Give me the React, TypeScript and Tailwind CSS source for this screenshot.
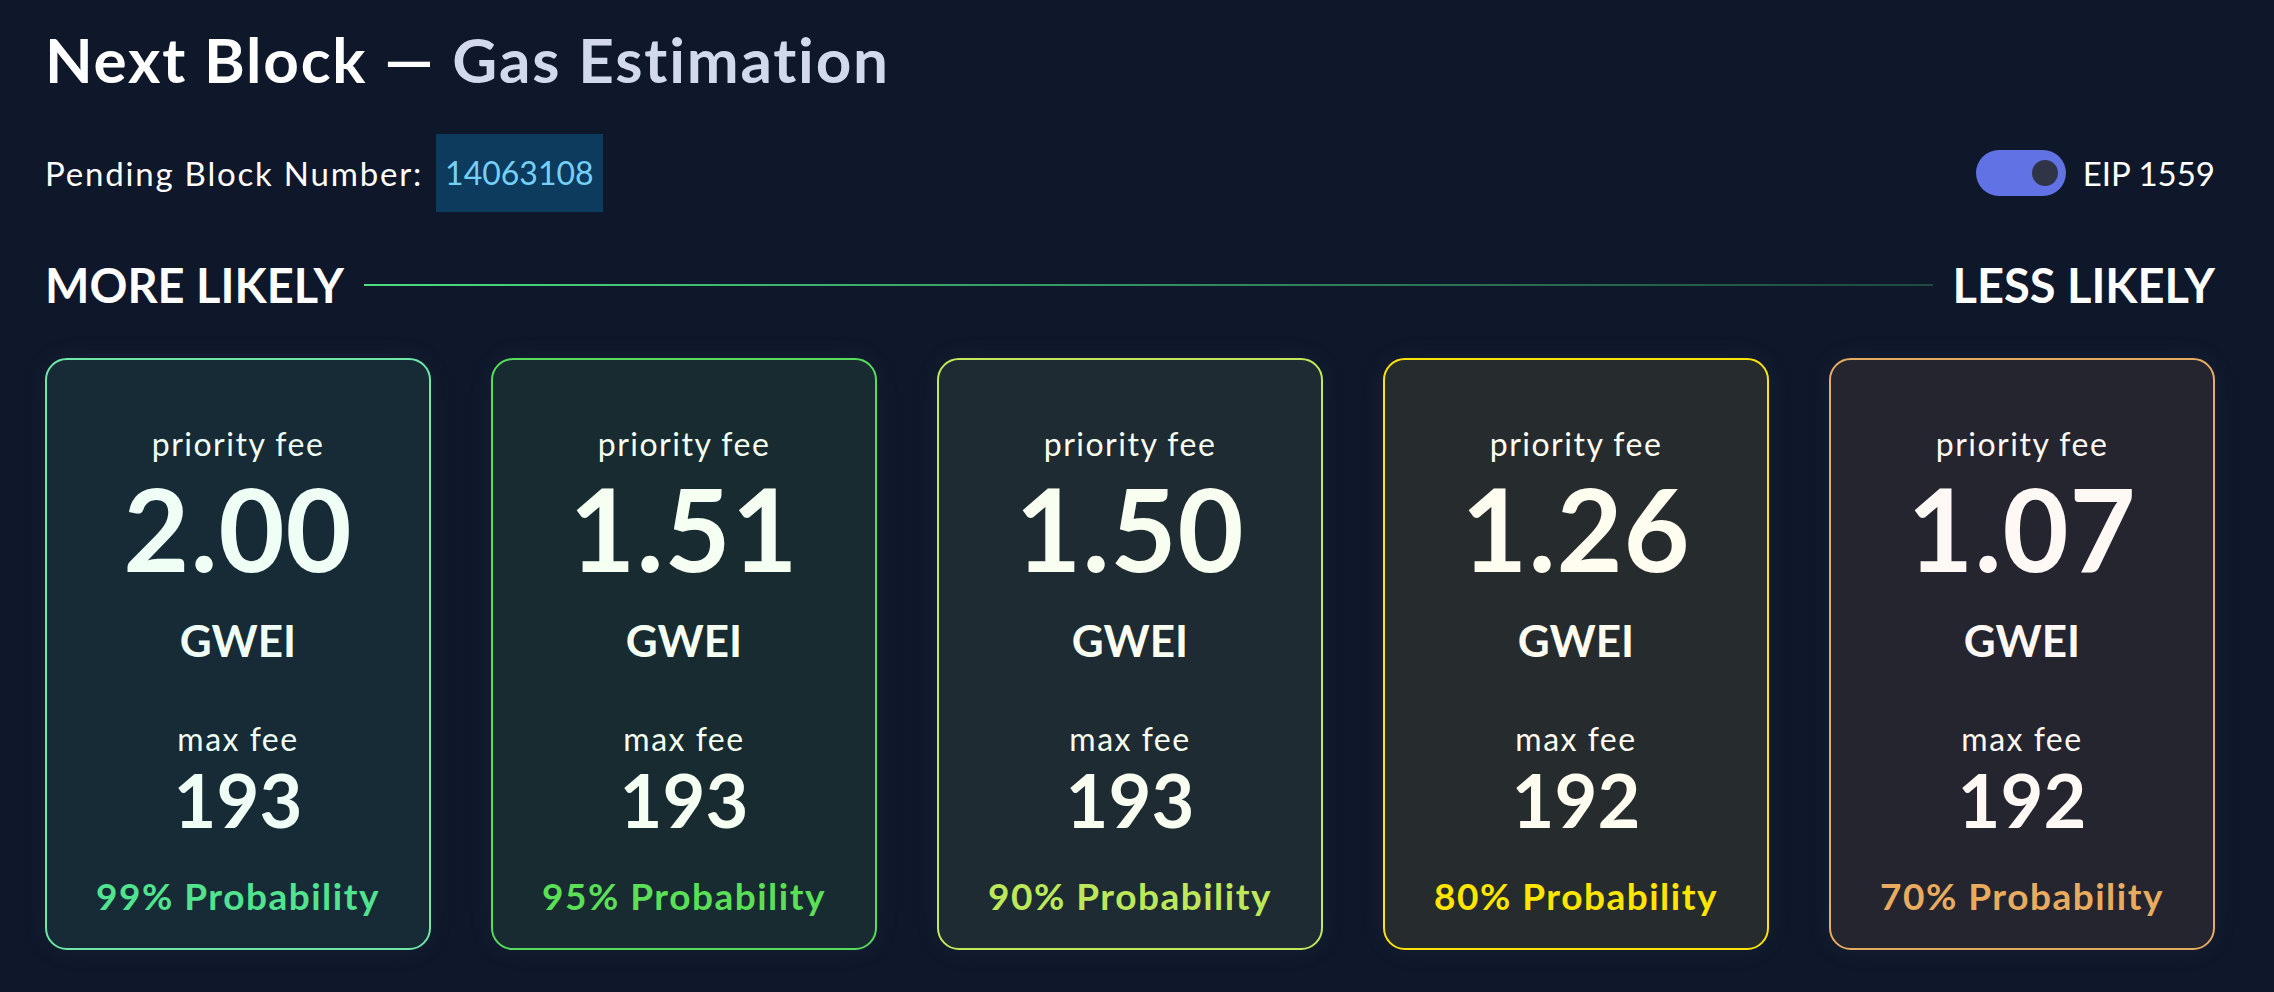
const CARDS = [
  {
    fee: "2.00",
    max: "193",
    prob: 99,
    card: "border-[#6ee7a7] bg-[#172b37]",
    text: "text-[#effff6]",
    accent: "text-[#52e38f]",
  },
  {
    fee: "1.51",
    max: "193",
    prob: 95,
    card: "border-[#58dc5c] bg-[#182b31]",
    text: "text-[#f5fff2]",
    accent: "text-[#5bdf57]",
  },
  {
    fee: "1.50",
    max: "193",
    prob: 90,
    card: "border-[#c2e85b] bg-[#1f2b32]",
    text: "text-[#f8fff0]",
    accent: "text-[#bde85a]",
  },
  {
    fee: "1.26",
    max: "192",
    prob: 80,
    card: "border-[#ffe20a] bg-[#262c2e]",
    text: "text-[#fffdf0]",
    accent: "text-[#ffe500]",
  },
  {
    fee: "1.07",
    max: "192",
    prob: 70,
    card: "border-[#e6ac62] bg-[#24252f]",
    text: "text-[#fff8f4]",
    accent: "text-[#e9ac5f]",
  },
];

function FeeCard({ item }: { item: (typeof CARDS)[number] }) {
  return (
    <div
      className={`flex h-[592px] flex-col items-center rounded-[22px] border-2 pt-[68px] shadow-[0_0_28px_rgba(148,163,184,0.07)] ${item.card} ${item.text}`}
    >
      <p className="text-[32px] leading-none tracking-[1.5px]">priority fee</p>
      <p className="mt-[11px] text-[114px] font-bold leading-none tracking-[1px]">{item.fee}</p>
      <p className="mt-[33px] text-[44px] font-bold leading-none">GWEI</p>
      <p className="mt-[61px] text-[32px] leading-none tracking-[1.5px]">max fee</p>
      <p className="mt-[8px] text-[74px] font-bold leading-none">{item.max}</p>
      <p className={`mt-[40px] text-[37px] font-bold leading-none tracking-[1.5px] ${item.accent}`}>
        {item.prob}% Probability
      </p>
    </div>
  );
}

export default function App() {
  return (
    <div className="min-h-[992px] bg-[#0f172a] pl-[45px] pr-[59px] pt-[28px] font-['Lato',sans-serif] text-white">
      <h1 className="text-[62px] font-bold leading-none tracking-[1.8px]">
        Next Block — <span className="text-[#d2d9ec]">Gas Estimation</span>
      </h1>

      <div className="mt-[44px] flex h-[78px] items-center justify-between">
        <div className="flex h-full items-center">
          <span className="text-[33px] leading-none tracking-[1.8px]">Pending Block Number:</span>
          <span className="ml-[13px] flex h-full items-center bg-[#0d3b5e] px-[9px] text-[32px] leading-none text-[#74d0f6]">
            14063108
          </span>
        </div>
        <div className="flex items-center">
          <button
            type="button"
            aria-pressed="true"
            className="flex h-[46px] w-[90px] items-center justify-end rounded-full bg-[#6172e4] pr-[8px]"
          >
            <span className="h-[26px] w-[26px] rounded-full bg-[#2f3447]" />
          </button>
          <span className="ml-[17px] text-[33px] leading-none">EIP 1559</span>
        </div>
      </div>

      <div className="mt-[49px] flex h-[48px] items-center">
        <span className="text-[47px] font-bold leading-none">MORE LIKELY</span>
        <div className="mx-[20px] h-[2px] flex-1 bg-gradient-to-r from-[#4ade80] to-[#1d4a40]" />
        <span className="text-[47px] font-bold leading-none">LESS LIKELY</span>
      </div>

      <div className="mt-[49px] grid grid-cols-5 gap-[60px]">
        {CARDS.map((item) => (
          <FeeCard key={item.prob} item={item} />
        ))}
      </div>
    </div>
  );
}
